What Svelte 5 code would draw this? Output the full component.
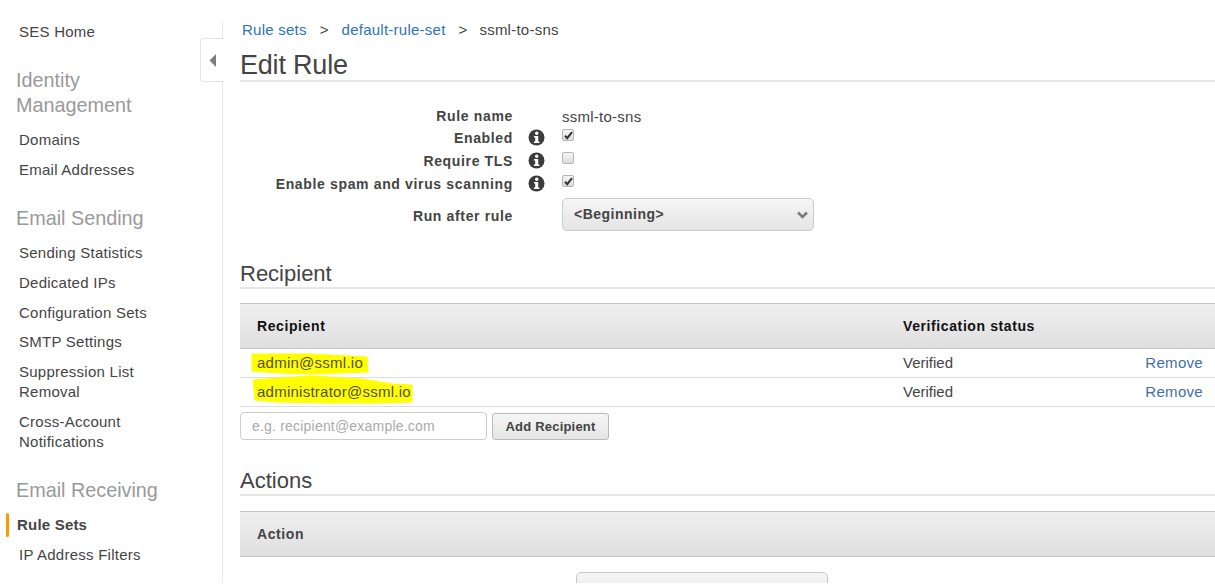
<script>
  const groups = [
    { title: ['Identity', 'Management'], items: ['Domains', 'Email Addresses'] },
    { title: ['Email Sending'], items: ['Sending Statistics', 'Dedicated IPs', 'Configuration Sets', 'SMTP Settings', 'Suppression List Removal', 'Cross-Account Notifications'] },
    { title: ['Email Receiving'], items: ['Rule Sets', 'IP Address Filters'] }
  ];
  const options = [
    { label: 'Enabled', checked: true },
    { label: 'Require TLS', checked: false },
    { label: 'Enable spam and virus scanning', checked: true }
  ];
  const recipients = [
    { email: 'admin@ssml.io', marker: '12,5 70,5 127,8 128,23 72,25 38,24 12,22' },
    { email: 'administrator@ssml.io', marker: '13,2 38,0 72,-2 122,1 152,6 172,7 172,24 138,25 88,25 38,24 15,22' }
  ];
</script>

<div class="page">
  <aside class="sidebar">
    <a class="home">SES Home</a>
    {#each groups as g}
      <h3>{#each g.title as t}<span>{t}</span>{/each}</h3>
      <ul>
        {#each g.items as item}
          <li class:active={item === 'Rule Sets'}>{item}</li>
        {/each}
      </ul>
    {/each}
    <div class="collapse">
      <svg width="8" height="13" viewBox="0 0 8 13"><path d="M7 0v13L0.5 6.5z" fill="#7d7d7d"/></svg>
    </div>
  </aside>

  <main>
    <nav class="crumbs">
      <a>Rule sets</a><span class="sep">&gt;</span><a>default-rule-set</a><span class="sep">&gt;</span><span class="current">ssml-to-sns</span>
    </nav>
    <h1>Edit Rule</h1>

    <section class="form">
      <div class="row name">
        <label>Rule name</label><span class="icon"></span><span class="value">ssml-to-sns</span>
      </div>
      {#each options as o}
        <div class="row opt">
          <label>{o.label}</label>
          <span class="icon">
            <svg width="17" height="17" viewBox="0 0 17 17">
              <circle cx="8.5" cy="8.5" r="8" fill="#3c3c3c"/>
              <circle cx="8.7" cy="4.2" r="1.7" fill="#fff"/>
              <path d="M6 7h4.2v5.4h1.2V14H5.9v-1.6h1.3V8.6H6z" fill="#fff"/>
            </svg>
          </span>
          <span class="box" class:on={o.checked}>
            {#if o.checked}
              <svg width="9" height="9" viewBox="0 0 9 9"><path d="M1 4.8l2.2 2.4L8 1.2" fill="none" stroke="#333" stroke-width="2"/></svg>
            {/if}
          </span>
        </div>
      {/each}
      <div class="row run">
        <label>Run after rule</label><span class="icon"></span>
        <div class="select">
          <span>&lt;Beginning&gt;</span>
          <svg width="11" height="8" viewBox="0 0 11 8"><path d="M1 1.5l4.5 4.5L10 1.5" fill="none" stroke="#7d7d7d" stroke-width="2.6"/></svg>
        </div>
      </div>
    </section>

    <h2 class="recipient-h">Recipient</h2>
    <div class="thead">
      <span class="c1 strong">Recipient</span><span class="c2 strong">Verification status</span>
    </div>
    {#each recipients as r}
      <div class="trow">
        <svg class="marker" width="180" height="29"><polygon points={r.marker} fill="#ff0" stroke="#ff0" stroke-width="1" stroke-linejoin="round"/></svg>
        <span class="c1 email">{r.email}</span>
        <span class="c2 plain">Verified</span>
        <a class="remove">Remove</a>
      </div>
    {/each}
    <div class="add">
      <input placeholder="e.g. recipient@example.com" />
      <button>Add Recipient</button>
    </div>

    <h2 class="actions-h">Actions</h2>
    <div class="thead action"><span class="c1 dark">Action</span></div>
    <div class="addbtn-wrap"><button class="addbtn">Add new action</button></div>
  </main>
</div>

<style>
  :global(body) { margin: 0; background: #fff; }
  .page {
    display: flex;
    height: 583px;
    overflow: hidden;
    font-family: "Liberation Sans", Arial, sans-serif;
    font-size: 15px;
    letter-spacing: 0.25px;
    color: #444;
    background: #fff;
  }
  .sidebar {
    position: relative;
    flex: 0 0 223px;
    box-sizing: border-box;
    margin-top: 20px;
    padding-left: 16px;
    border-right: 1px solid #eaeaea;
  }
  .home { display: block; margin: 2px 0 0 3px; padding-bottom: 4.5px; line-height: 20px; }
  h3 {
    margin: 21.5px 0 7px;
    font-size: 19.8px;
    font-weight: 400;
    line-height: 25px;
    letter-spacing: 0;
    color: #999;
  }
  h3 span { display: block; }
  ul { list-style: none; margin: 0; padding: 0; }
  li { position: relative; margin-left: 3px; padding: 4.9px 0; line-height: 20px; width: 135px; }
  li.active { margin-left: 1px; font-weight: 700; letter-spacing: 0.2px; color: #444; }
  li.active::before {
    content: "";
    position: absolute;
    left: -11px;
    top: 3px;
    bottom: 3px;
    width: 3px;
    background: #f90;
    border-radius: 2px;
  }
  .collapse {
    position: absolute;
    right: -1px;
    top: 18px;
    box-sizing: border-box;
    width: 23px;
    height: 44px;
    display: flex;
    align-items: center;
    padding-left: 8px;
    background: #fff;
    border: 1px solid #e6e6e6;
    border-right: 0;
    border-radius: 4px 0 0 4px;
  }
  main { flex: 1; min-width: 0; padding-left: 17px; }
  .crumbs { margin: 20px 0 0 2px; line-height: 20px; }
  .crumbs a { color: #2e73b8; }
  .sep { margin: 0 13px; letter-spacing: 0; }
  .current { margin-left: -1px; }
  h1 {
    margin: 12px 0 0;
    padding-bottom: 1px;
    font-size: 27px;
    font-weight: 400;
    line-height: 27px;
    color: #444;
    border-bottom: 2px solid #e6e6e6;
    letter-spacing: -0.2px;
  }
  .form { margin-top: 24px; }
  .row { display: flex; align-items: center; }
  label { width: 273px; text-align: right; font-weight: 700; letter-spacing: 0.65px; font-size: 14px; color: #444; }
  .icon { flex: 0 0 17px; margin: 0 0 0 15px; height: 17px; }
  .value { margin-left: 17px; }
  .name { height: 20px; }
  .opt { height: 23px; }
  .box {
    box-sizing: border-box;
    margin: -5px 0 0 17px;
    width: 12px;
    height: 12px;
    display: flex;
    align-items: center;
    justify-content: center;
    background: linear-gradient(#f4f4f4, #ddd);
    border: 1px solid #b5b5b5;
    border-radius: 2px;
  }
  .run { margin-top: 3px; }
  .run label { padding-top: 2px; }
  .select {
    box-sizing: border-box;
    margin-left: 17px;
    width: 252px;
    height: 33px;
    display: flex;
    align-items: center;
    justify-content: space-between;
    padding: 0 5px 2px 11px;
    background: linear-gradient(#f6f6f6, #e4e4e4);
    border: 1px solid #ccc;
    border-radius: 5px;
    font-weight: 700;
    font-size: 14px;
    letter-spacing: 0.5px;
  }
  .select svg { margin-top: 2px; }
  h2 {
    margin: 0;
    font-size: 22px;
    font-weight: 400;
    line-height: 25px;
    letter-spacing: 0;
    color: #444;
    border-bottom: 2px solid #e6e6e6;
    padding-bottom: 1px;
  }
  .recipient-h { margin-top: 30px; }
  .thead {
    box-sizing: border-box;
    display: flex;
    align-items: center;
    height: 46px;
    margin-top: 14px;
    background: linear-gradient(#efefef, #dfdfdf);
    border-top: 1px solid #c6c6c6;
    border-bottom: 1px solid #c6c6c6;
  }
  .c1 { flex: 0 0 663px; padding-left: 17px; box-sizing: border-box; position: relative; }
  .c2 { flex: 0 0 auto; }
  .plain { letter-spacing: 0; }
  .strong { font-weight: 700; color: #111; font-size: 14px; letter-spacing: 0.6px; }
  .dark { font-weight: 700; color: #444; font-size: 14px; letter-spacing: 0.6px; }
  .trow {
    position: relative;
    box-sizing: border-box;
    display: flex;
    align-items: center;
    height: 29px;
    padding-bottom: 2px;
    border-bottom: 1px solid #ddd;
  }
  .marker { position: absolute; left: 0; top: 0; overflow: visible; }
  .email { color: #554f2a; }
  .remove { position: absolute; right: 12px; color: #3f6fa8; letter-spacing: 0.3px; }
  .add { display: flex; align-items: center; gap: 5px; margin-top: 5px; }
  input {
    box-sizing: border-box;
    width: 247px;
    height: 28px;
    padding: 0 11px;
    font: inherit;
    font-size: 14px;
    letter-spacing: 0.2px;
    border: 1px solid #ccc;
    border-radius: 4px;
    outline: none;
  }
  input::placeholder { color: #aaa; opacity: 1; }
  button {
    box-sizing: border-box;
    height: 27px;
    width: 117px;
    padding: 0;
    font: inherit;
    font-size: 13px;
    font-weight: 700;
    letter-spacing: 0.2px;
    color: #444;
    background: linear-gradient(#f6f6f6, #e4e4e4);
    border: 1px solid #bbb;
    border-radius: 3px;
  }
  .actions-h { margin-top: 28px; }
  .thead.action { margin-top: 15px; }
  .addbtn-wrap { padding-left: 336px; margin-top: 15px; }
  .addbtn { width: 252px; height: 34px; padding-top: 1px; background: linear-gradient(#f6f6f6, #e4e4e4); border-color: #c6c6c6; border-radius: 5px; display: block; font-size: 14px; letter-spacing: 0.55px; }
</style>
